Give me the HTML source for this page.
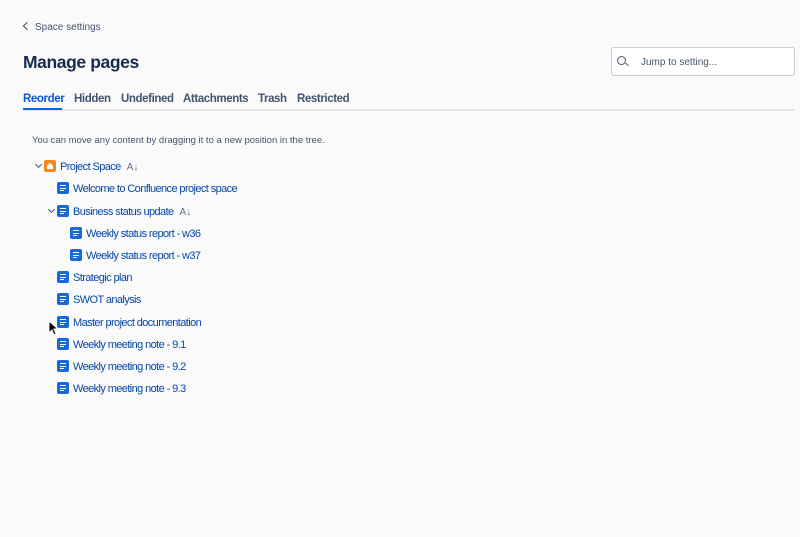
<!DOCTYPE html><html><head><style>
body{margin:0;width:800px;height:537px;background:#fafafb;font-family:"Liberation Sans",sans-serif;position:relative;overflow:hidden;color:#172b4d}
.a{position:absolute;white-space:nowrap}
.t{font-size:11px;color:#0747a6;line-height:14px;letter-spacing:-0.6px}
.ic{position:absolute;width:12px;height:12px;background:#1868db;border-radius:2px}
.ic i{position:absolute;left:3px;height:1.2px;background:#fff}
.chev{position:absolute;width:4px;height:4px;border-right:1.2px solid #44546f;border-bottom:1.2px solid #44546f;transform:rotate(45deg)}
.tab{font-size:11.5px;color:#44546f;top:93px;letter-spacing:-0.1px;font-weight:bold;letter-spacing:-0.4px}
.sort{font-size:10px;color:#626f86;margin-left:6px;letter-spacing:0}
</style></head><body>
<div class="a" style="left:24px;top:23px;width:5px;height:5px;border-left:1.5px solid #44546f;border-bottom:1.5px solid #44546f;transform:rotate(45deg)"></div>
<div class="a" style="left:35px;top:22px;font-size:10px;color:#44546f">Space settings</div>
<div class="a" style="left:23px;top:52px;font-size:17.5px;font-weight:bold;color:#172b4d;letter-spacing:-0.4px">Manage pages</div>
<div class="a" style="left:611px;top:47px;width:182px;height:27px;border:1.2px solid #c8ccd4;border-radius:3px;background:#fff"></div>
<div class="a" style="left:617px;top:56px;width:7px;height:7px;border:1.3px solid #44546f;border-radius:50%"></div>
<div class="a" style="left:625px;top:64px;width:4px;height:1.3px;background:#44546f;transform:rotate(45deg)"></div>
<div class="a" style="left:641px;top:57px;font-size:10px;color:#44546f">Jump to setting...</div>
<div class="a tab" style="left:23px;color:#0c55cc">Reorder</div>
<div class="a tab" style="left:74px">Hidden</div>
<div class="a tab" style="left:121px">Undefined</div>
<div class="a tab" style="left:183px">Attachments</div>
<div class="a tab" style="left:258px">Trash</div>
<div class="a tab" style="left:297px">Restricted</div>
<div class="a" style="left:23px;top:109px;width:772px;height:1.5px;background:#e2e4e9"></div>
<div class="a" style="left:23px;top:108px;width:39px;height:2px;background:#0c66e4"></div>
<div class="a" style="left:32px;top:135px;font-size:9.5px;color:#44546f">You can move any content by dragging it to a new position in the tree.</div>

<div class="chev" style="left:36px;top:162px"></div>
<div class="ic" style="left:44px;top:160px;background:#f38a1e"><span style="position:absolute;left:3px;top:3px;width:6px;height:6px;background:#fff;clip-path:polygon(50% 0,100% 45%,100% 100%,0 100%,0 45%)"></span></div>
<div class="a t" style="left:60px;top:160px">Project Space<span class="sort">A↓</span></div>

<div class="ic" style="left:57px;top:182px"><i style="top:3px;width:6px"></i><i style="top:5.5px;width:6px"></i><i style="top:8px;width:4px"></i></div>
<div class="a t" style="left:73px;top:182px">Welcome to Confluence project space</div>

<div class="chev" style="left:49px;top:207px"></div>
<div class="ic" style="left:57px;top:205px"><i style="top:3px;width:6px"></i><i style="top:5.5px;width:6px"></i><i style="top:8px;width:4px"></i></div>
<div class="a t" style="left:73px;top:205px">Business status update<span class="sort">A↓</span></div>

<div class="ic" style="left:70px;top:227px"><i style="top:3px;width:6px"></i><i style="top:5.5px;width:6px"></i><i style="top:8px;width:4px"></i></div>
<div class="a t" style="left:86px;top:227px">Weekly status report - w36</div>
<div class="ic" style="left:70px;top:249px"><i style="top:3px;width:6px"></i><i style="top:5.5px;width:6px"></i><i style="top:8px;width:4px"></i></div>
<div class="a t" style="left:86px;top:249px">Weekly status report - w37</div>

<div class="ic" style="left:57px;top:271px"><i style="top:3px;width:6px"></i><i style="top:5.5px;width:6px"></i><i style="top:8px;width:4px"></i></div>
<div class="a t" style="left:73px;top:271px">Strategic plan</div>
<div class="ic" style="left:57px;top:293px"><i style="top:3px;width:6px"></i><i style="top:5.5px;width:6px"></i><i style="top:8px;width:4px"></i></div>
<div class="a t" style="left:73px;top:293px">SWOT analysis</div>
<div class="ic" style="left:57px;top:316px"><i style="top:3px;width:6px"></i><i style="top:5.5px;width:6px"></i><i style="top:8px;width:4px"></i></div>
<div class="a t" style="left:73px;top:316px">Master project documentation</div>
<svg class="a" style="left:48px;top:320px" width="10" height="16" viewBox="0 0 10 16"><path d="M1 1 L1 13 L4 10 L6 15 L8 14 L6 9 L10 9 Z" fill="#000" stroke="#fff" stroke-width="1"/></svg>
<div class="ic" style="left:57px;top:338px"><i style="top:3px;width:6px"></i><i style="top:5.5px;width:6px"></i><i style="top:8px;width:4px"></i></div>
<div class="a t" style="left:73px;top:338px">Weekly meeting note - 9.1</div>
<div class="ic" style="left:57px;top:360px"><i style="top:3px;width:6px"></i><i style="top:5.5px;width:6px"></i><i style="top:8px;width:4px"></i></div>
<div class="a t" style="left:73px;top:360px">Weekly meeting note - 9.2</div>
<div class="ic" style="left:57px;top:382px"><i style="top:3px;width:6px"></i><i style="top:5.5px;width:6px"></i><i style="top:8px;width:4px"></i></div>
<div class="a t" style="left:73px;top:382px">Weekly meeting note - 9.3</div>
</body></html>
